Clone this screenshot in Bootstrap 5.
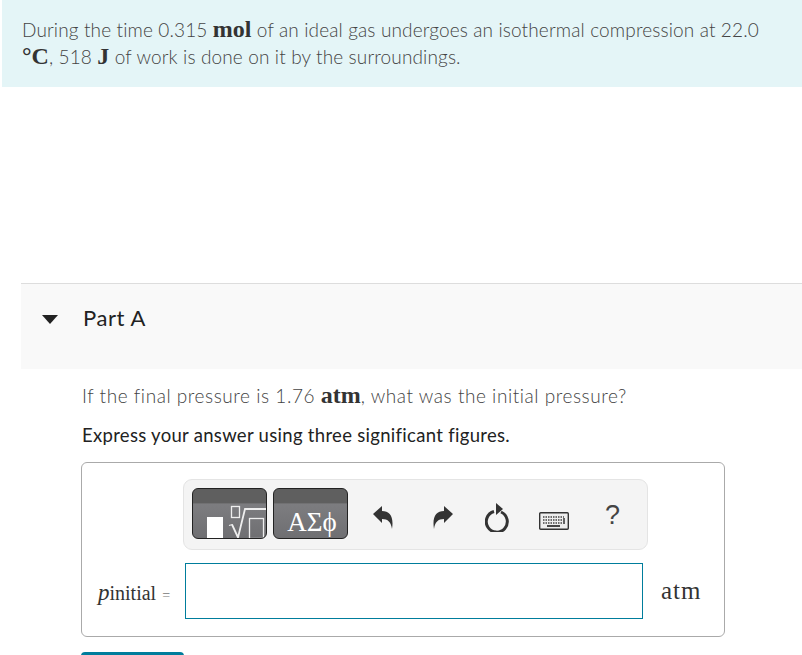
<!DOCTYPE html>
<html lang="en"><head><meta charset="utf-8"><title>Part A</title>
<link rel="stylesheet" href="https://cdn.jsdelivr.net/npm/bootstrap@5.3.0/dist/css/bootstrap.min.css">
<style>
html,body{height:655px;overflow:hidden;background:#fff}
body{font-family:"Lato","Noto Sans",sans-serif;font-weight:300;color:#444;font-size:17px}
.intro-band{margin-left:2px;height:87px;background:#e4f5f7;padding:16px 20px 0;line-height:27px;font-size:19px;letter-spacing:.14px;white-space:nowrap}
.mth{font-family:"Liberation Serif",serif;font-weight:700;color:#333;font-size:24px;letter-spacing:0}
.part-bar{margin:196px 0 0 21px;height:86px;background:#f9f9f9;border-top:1px solid #ddd;padding:20px 0 0 21px;gap:25px;color:#222;font-weight:400;font-size:22px;letter-spacing:.6px;line-height:28px}
.part-caret{width:16px;height:9px;margin-top:11px;flex:none}
.part-body{margin-left:81px;width:644px}
.q-line{margin:12px 0 0 1px;line-height:28px;font-size:19px;letter-spacing:.55px;white-space:nowrap}
.q-note{margin:11px 0 0 1px;line-height:28px;color:#222;font-weight:400;font-size:18.500px;letter-spacing:.3px;white-space:nowrap}
.ans-box{margin-top:13px;height:175px;border:1px solid #aaa;border-radius:6px;padding-top:16px}
.tool-bar{margin-left:101px;width:465px;height:71px;background:#f4f4f4;border:1px solid #e4e4e4;border-radius:9px;padding:8px 0 0 8px}
.tpl-btn{width:75px;height:51px;border:1px solid #222;border-radius:6px;background:linear-gradient(#5f5f5f 0,#5f5f5f 29%,#7d7d80 30%,#6f6f72 100%);color:#fff;overflow:hidden;padding:0}
.tpl-gap{gap:6px}
.tpl-btn svg{display:block}
.greek{font-family:"Liberation Serif",serif;font-size:27px;line-height:1;padding:20px 0 0 3px;text-align:center;display:block}
.tool-ico{flex:none;display:block}
.ico-undo{margin:17px 0 0 19px}
.ico-redo{margin:17px 0 0 32px}
.ico-refresh{margin:15px 0 0 26px}
.ico-keys{margin:24px 0 0 23px}
.help-mark{font-family:"Liberation Sans",sans-serif;font-weight:400;font-size:27px;color:#444;line-height:1;margin:14px 0 0 30px}
.ans-row{margin-top:13px}
.var-label{width:103px;padding:5px 0 0 16px;font-family:"Liberation Serif",serif;font-size:20px;color:#333;font-weight:400;white-space:nowrap}
.var-label i{font-size:23px}
.var-label span{color:#777;font-size:14px;margin-left:6px}
.ans-input{width:458px;height:56px;border:1px solid #007d9c;background:#fff}
.unit-label{margin-left:18px;font-family:"Liberation Serif",serif;font-size:25px;letter-spacing:1px;color:#333;font-weight:400}
.submit-edge{margin-top:15px;width:103px;height:20px;background:#007d9c;border-radius:4px 4px 0 0}
</style></head>
<body>
<div class="intro-band">During the time 0.315 <span class="mth">mol</span> of an ideal gas undergoes an isothermal compression at 22.0<br><span class="mth">°C</span>, 518 <span class="mth">J</span> of work is done on it by the surroundings.</div>
<div class="part-bar d-flex align-items-start">
<svg class="part-caret" viewBox="0 0 16 9"><path d="M0 0H16L8 9Z" fill="#222"/></svg>
<span>Part A</span></div>
<div class="part-body">
<p class="q-line">If the final pressure is 1.76 <span class="mth">atm</span>, what was the initial pressure?</p>
<p class="q-note">Express your answer using three significant figures.</p>
<div class="ans-box">
<div class="tool-bar d-flex tpl-gap align-items-start">
<div class="tpl-btn"><svg width="73" height="49" viewBox="0 0 73 49"><rect x="14" y="28" width="16" height="22" fill="#fff"/><g fill="none" stroke="#eee" stroke-width="1.300"><rect x="38.500" y="17.500" width="8" height="11"/><path d="M36 36.500l3.500-1"/><path d="M39 35.500l6 13 7-28.500h21" stroke-width="1.800"/><rect x="56.500" y="29.500" width="14" height="20"/></g></svg></div>
<div class="tpl-btn"><span class="greek">ΑΣϕ</span></div>
<svg class="tool-ico ico-undo" width="21" height="24" viewBox="0 0 21 24"><path d="M0 9 9 1v5c8 0 12 6 10 18-1-7-4-10-10-10v4Z" fill="#333"/></svg>
<svg class="tool-ico ico-redo" width="21" height="24" viewBox="0 0 21 24"><path d="M21 9 12 1v5C4 6 0 12 2 24c1-7 4-10 10-10v4Z" fill="#333"/></svg>
<svg class="tool-ico ico-refresh" width="25" height="29" viewBox="0 0 25 29"><path d="M9 8.500a10.500 10.500 0 1 0 7 .5" fill="none" stroke="#333" stroke-width="3"/><path d="M11 0l7 6-7 6Z" fill="#333"/></svg>
<svg class="tool-ico ico-keys" width="30" height="18" viewBox="0 0 30 18"><rect x=".7" y=".7" width="28.600" height="16.600" rx="1" fill="#eee" stroke="#333" stroke-width="1.400"/><path d="M4 5h21M4 8h19M4 11h19" stroke="#444" stroke-width="1.500" stroke-dasharray="1.500 1"/><path d="M8 14h13" stroke="#333" stroke-width="1.800"/><path d="M25 6v6" stroke="#333" stroke-width="1.500"/></svg>
<span class="help-mark">?</span>
</div>
<div class="ans-row d-flex align-items-center">
<div class="var-label"><i>p</i>initial<span>=</span></div>
<div class="ans-input"></div>
<div class="unit-label">atm</div>
</div>
</div>
<div class="submit-edge"></div>
</div>
</body></html>
